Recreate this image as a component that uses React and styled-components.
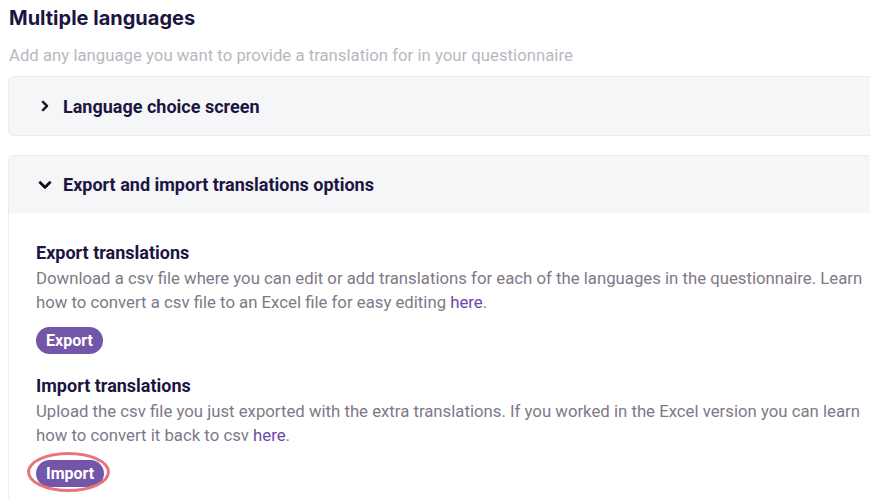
import React from "react";
import styled, { createGlobalStyle } from "styled-components";
import { FaChevronRight, FaChevronDown } from "react-icons/fa";

const Global = createGlobalStyle`
  html, body { margin: 0; padding: 0; background: #ffffff; overflow: hidden; }
  body { font-family: Roboto, "Liberation Sans", sans-serif; }
`;

const Page = styled.div`
  width: 900px;
  padding: 6px 0 0 8px;
  box-sizing: border-box;
`;

const Title = styled.h1`
  margin: 0 0 0 1px;
  font-family: Inter, Roboto, "Liberation Sans", sans-serif;
  font-size: 20px;
  line-height: 24px;
  font-weight: 700;
  color: #1c1541;
`;

const Subtitle = styled.p`
  margin: 13px 0 0 1px;
  font-size: 16.75px;
  line-height: 24px;
  color: #bab7c1;
`;

const Panel = styled.section`
  margin-top: ${(p) => p.$top}px;
  border: 1px solid #ebebf0;
  border-radius: 5px;
  background: #ffffff;
  overflow: hidden;
`;

const PanelHeader = styled.div`
  display: flex;
  align-items: center;
  gap: 10px;
  height: ${(p) => p.$h}px;
  padding-left: 28px;
  background: #f5f6f8;
  color: #1c1541;
  font-size: 18px;
  font-weight: 700;
`;

const IconBox = styled.span`
  display: flex;
  align-items: center;
  justify-content: center;
  width: 16px;
  flex: none;
  color: #0d0d12;
  svg { stroke: currentColor; stroke-width: 30px; }
`;

const PanelBody = styled.div`
  padding: 28px 0 30px 27px;
`;

const Block = styled.div`
  margin-top: ${(p) => p.$top || 0}px;
`;

const BlockTitle = styled.h2`
  margin: 0;
  font-size: 18px;
  line-height: 24px;
  font-weight: 700;
  color: #1c1541;
`;

const BlockText = styled.p`
  margin: 1px 0 0;
  font-size: 16.75px;
  line-height: 24px;
  color: #7f7889;
  white-space: nowrap;
`;

const Link = styled.a`
  color: #6a4aa8;
  text-decoration: none;
`;

const ButtonWrap = styled.div`
  position: relative;
  display: inline-block;
  margin-top: 13px;
`;

const PillButton = styled.button`
  display: inline-flex;
  align-items: center;
  height: 27px;
  padding: 0 10px;
  border: none;
  border-radius: 14px;
  background: #7356a8;
  color: #ffffff;
  font-family: Roboto, "Liberation Sans", sans-serif;
  font-size: 16px;
  font-weight: 700;
  cursor: pointer;
`;

const Highlight = styled.span`
  position: absolute;
  left: -9px;
  top: -8px;
  right: -6px;
  bottom: -5px;
  border: 3px solid #e8737a;
  border-radius: 50%;
  pointer-events: none;
`;

export default function App() {
  return (
    <>
      <Global />
      <Page>
        <Title>Multiple languages</Title>
        <Subtitle>Add any language you want to provide a translation for in your questionnaire</Subtitle>

        <Panel $top={9}>
          <PanelHeader $h={58}>
            <IconBox><FaChevronRight size={12} /></IconBox>
            <span>Language choice screen</span>
          </PanelHeader>
        </Panel>

        <Panel $top={19}>
          <PanelHeader $h={57}>
            <IconBox><FaChevronDown size={14} /></IconBox>
            <span>Export and import translations options</span>
          </PanelHeader>
          <PanelBody>
            <Block>
              <BlockTitle>Export translations</BlockTitle>
              <BlockText>
                Download a csv file where you can edit or add translations for each of the languages in the questionnaire. Learn
                <br />
                how to convert a csv file to an Excel file for easy editing <Link href="#">here</Link>.
              </BlockText>
              <ButtonWrap>
                <PillButton>Export</PillButton>
              </ButtonWrap>
            </Block>
            <Block $top={20}>
              <BlockTitle>Import translations</BlockTitle>
              <BlockText>
                Upload the csv file you just exported with the extra translations. If you worked in the Excel version you can learn
                <br />
                how to convert it back to csv <Link href="#">here</Link>.
              </BlockText>
              <ButtonWrap>
                <PillButton>Import</PillButton>
                <Highlight />
              </ButtonWrap>
            </Block>
          </PanelBody>
        </Panel>
      </Page>
    </>
  );
}
